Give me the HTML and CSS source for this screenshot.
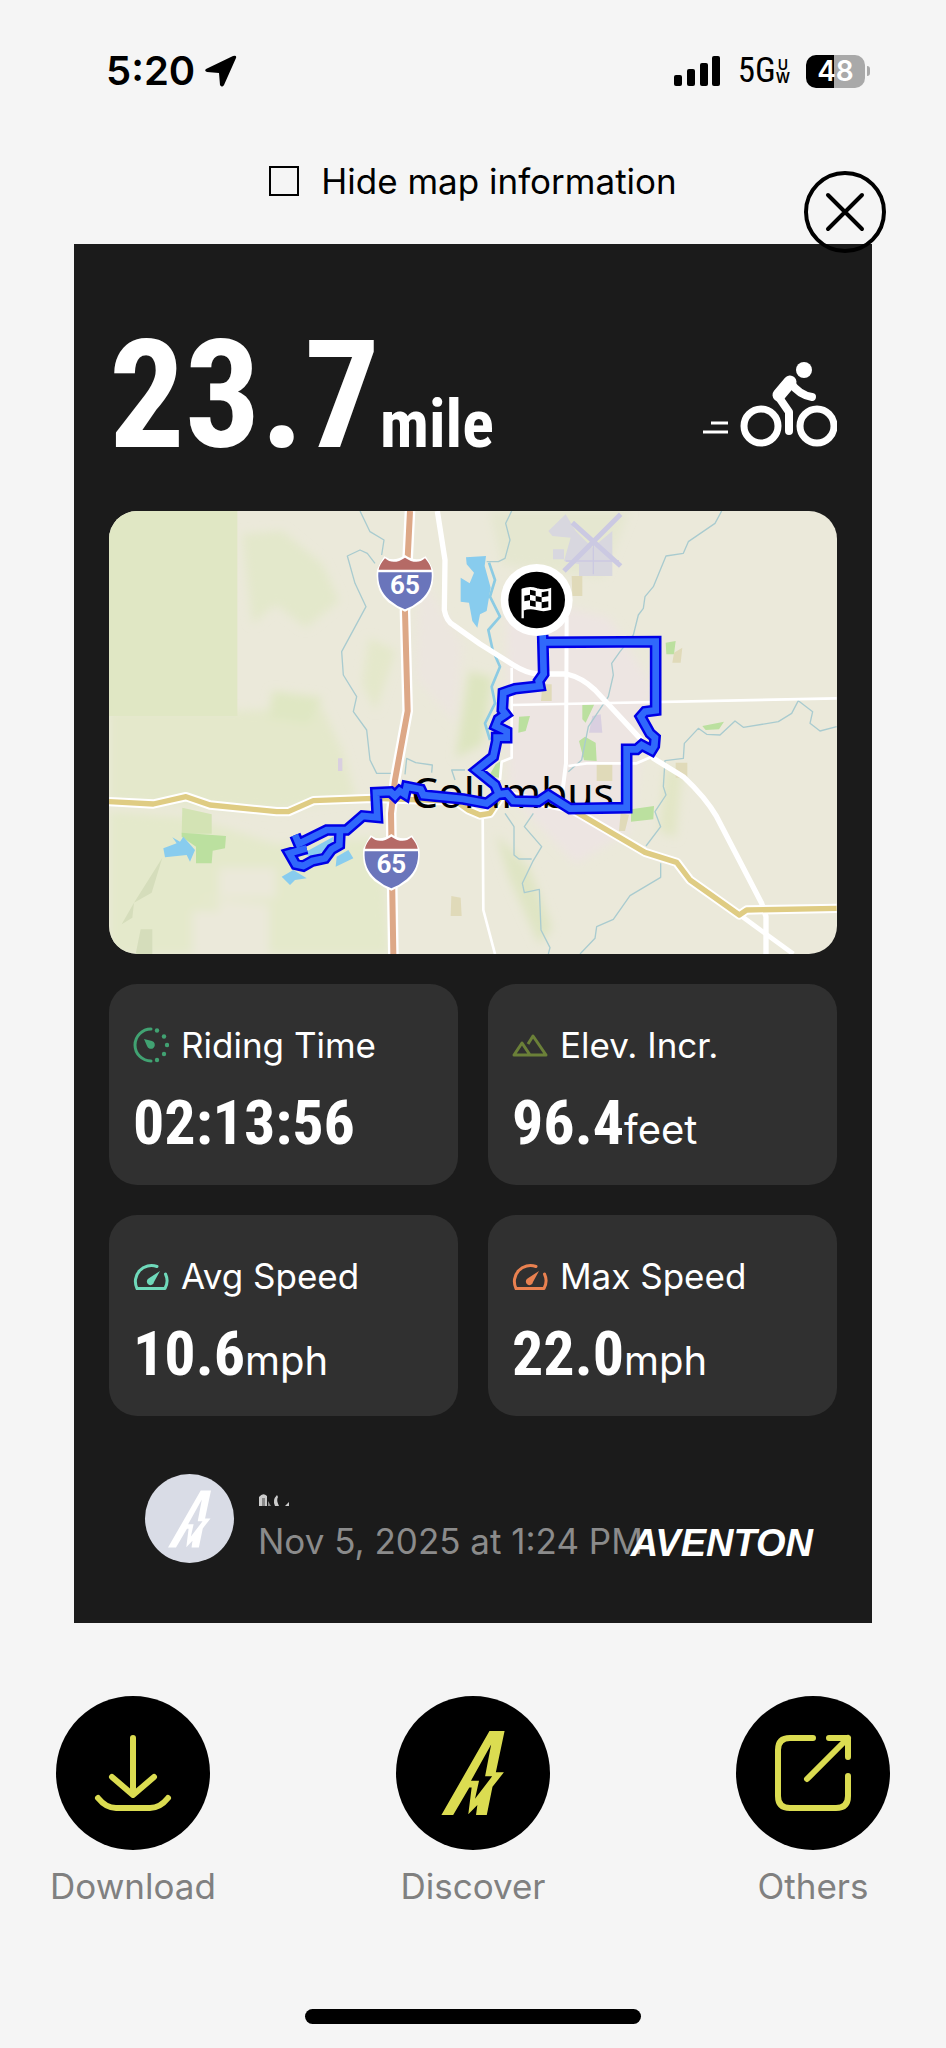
FILE: index.html
```html
<!DOCTYPE html>
<html lang="en">
  <head>
    <meta charset="utf-8">
    <meta name="viewport" content="width=device-width, initial-scale=1">
    <title>Share ride</title>
    <link rel="stylesheet" href="styles.css">
  </head>
  <body>
    <!-- shared shapes -->
    <svg width="0" height="0" class="defs" aria-hidden="true">
      <symbol id="logo" viewBox="-55 150 188 250">
        <path fill="currentColor" fill-rule="evenodd" d="M88 150H133L107 273H131L97 316L80 400H48L52 370L25 398L35 318H28L-20 400H-55ZM93 190L33 298H57L45 352L96 285H75Z"/>
      </symbol>
      <symbol id="gauge" viewBox="0 0 36 36">
        <path d="M24 8.500A16 16 0 0 0 4 30.500H32A16 16 0 0 0 32.500 16" fill="none" stroke="currentColor" stroke-width="3" stroke-linejoin="round" stroke-linecap="round"/>
        <path d="M27 13L21 24A3.600 3.600 0 1 1 15.500 20.500Z" fill="currentColor"/>
      </symbol>
      <symbol id="shield" viewBox="-88 -88 176 176">
        <path d="M-62-80Q-35-60 0-84Q35-60 62-80Q75-60 84-40Q92 20 50 58Q25 76 0 86Q-25 76-50 58Q-92 20-84-40Q-75-60-62-80Z" fill="#fff"/>
        <path d="M-60-74Q-35-52 0-76Q35-52 60-74Q76-56 79-40H-79Q-76-56-60-74Z" fill="#b56a66"/>
        <path d="M-80-32H80Q84 20 46 52Q25 70 0 79Q-25 70-46 52Q-84 20-80-32Z" fill="#6a75bb"/>
      </symbol>
    </svg>

    <div class="page">
      <header class="status-bar">
        <div class="status-left">
          <span class="clock">5:20</span>
          <svg class="location" viewBox="0 0 32 32"><path d="M31 3L19 30Q17 33 15 30L14 18L2 17Q-1 16 1 14L28 1Q32 0 31 3Z"/></svg>
        </div>
        <div class="status-right">
          <svg class="signal" viewBox="0 0 46 30">
            <rect x="0" y="19" width="8" height="11" rx="2"/>
            <rect x="13" y="13" width="8" height="17" rx="2"/>
            <rect x="26" y="7" width="8" height="23" rx="2"/>
            <rect x="38" y="0" width="8" height="30" rx="2"/>
          </svg>
          <span class="network">5G</span>
          <span class="network-sub"><span>U</span><span>W</span></span>
          <span class="battery">48</span>
          <span class="battery-tip"></span>
        </div>
      </header>

      <div class="toolbar">
        <label class="hide-map"><input type="checkbox" class="checkbox">Hide map information</label>
        <button class="close" aria-label="Close">
          <svg viewBox="0 0 84 84"><circle cx="42" cy="42" r="39"/><path d="M25 25L59 59M59 25L25 59"/></svg>
        </button>
      </div>

      <main class="card">
        <div class="summary">
          <div class="distance">23.7<span class="distance-unit">mile</span></div>
          <svg class="rider" viewBox="0 0 135 86">
            <g fill="none" stroke="#fff" stroke-linecap="round" stroke-linejoin="round">
              <circle cx="59" cy="65" r="17" stroke-width="7"/>
              <circle cx="115" cy="65" r="17" stroke-width="7"/>
              <path d="M9 62H26M1 71H26" stroke-width="3" stroke-linecap="butt"/>
              <path d="M87 70V51L76 35L88 21Q97 34 110 36" stroke-width="8"/>
              <path d="M77 34L88 21" stroke-width="13"/>
            </g>
            <circle cx="102" cy="9" r="8" fill="#fff"/>
          </svg>
        </div>

        <svg class="map" viewBox="0 0 2184 1329" role="img" aria-label="Ride route around Columbus">
          <defs>
            <filter id="soft"><feGaussianBlur stdDeviation="14"/></filter>
          </defs>
          <rect width="2184" height="1329" fill="#ebe9da"/>
          <!-- fields and built-up area -->
          <g filter="url(#soft)">
            <path d="M0 600H370L640 590L700 720L740 860L500 900L0 870Z" fill="#e4e8cb"/>
            <path d="M0 900L250 920L500 1000L820 980L840 1329H0Z" fill="#e4e9cb"/>
            <path d="M260 1160H500V1070H330V1200H250V1329H480V1180Z" fill="#ebe9da"/>
            <path d="M400 70L520 60L640 160L690 270L590 350L500 280L430 340Z" fill="#e3e8cb"/>
            <path d="M490 540L640 560L600 640L480 620Z" fill="#dfe7c3"/>
            <path d="M930 180L1060 400L1040 640L920 500Z" fill="#ece6df"/>
            <path d="M1190 240L1500 320L1630 520L1560 960L1400 1060L1200 850Z" fill="#ede5e2"/>
            <path d="M1140 0H1560L1480 200L1180 160Z" fill="#e5e7d0"/>
            <path d="M1160 970L1260 1070L1330 1250L1290 1300L1200 1100Z" fill="#dfe5c4"/>
            <path d="M1670 770L1720 780L1700 980L1650 960Z" fill="#e2e6c6"/>
            <path d="M780 380L860 420L800 600L760 520Z" fill="#e4e8cb"/>
            <path d="M1080 480L1150 500L1120 700L1040 740Z" fill="#dde5c0"/>
          </g>
          <rect width="385" height="615" fill="#e0e7c4"/>
          <path d="M160 1040L128 1145L75 1175ZM75 1175L38 1240L70 1220ZM95 1255H130V1329H80Z" fill="#d5ddbb"/>
          <!-- parks -->
          <path d="M220 890L308 910V968H218Z" fill="#d3e3b4"/>
          <path d="M218 965L351 975L348 1012L311 1019L308 1057H261V1007L218 977Z" fill="#bbe09f"/>
          <path d="M1230 617L1263 615L1250 660L1228 665ZM1420 582L1456 580L1430 635L1420 625ZM1410 690L1428 677L1460 695L1463 750L1425 748ZM1670 395L1700 390L1695 430L1672 430ZM1780 645L1845 632L1830 655L1790 657ZM1566 895L1635 885L1633 925L1566 932ZM1160 760L1175 750L1170 800L1140 795Z" fill="#bbe09f"/>
          <path d="M1463 760H1510V810H1463ZM1535 905L1560 912L1548 960H1530ZM1388 195H1420V255H1390ZM1695 425L1720 410L1715 455H1690ZM1300 520H1328V570H1296ZM1700 755H1735V800H1700ZM1027 1155L1055 1160L1058 1215H1025Z" fill="#e0dab9"/>
          <path d="M1450 615L1475 610L1480 665H1440ZM687 742H700V780H687Z" fill="#d9cfe0"/>
          <!-- airport -->
          <g fill="#d8d7df" stroke="#cbc9e2">
            <path d="M1318 60L1370 10L1400 60L1385 80L1330 75ZM1400 60L1450 110L1510 60V195H1410V160L1365 150L1385 80ZM1332 115H1365V145H1332Z" stroke="none"/>
            <path d="M1390 35L1535 165M1535 10L1365 180" stroke-width="15" fill="none"/>
            <path d="M1453 100V190M1370 150H1530" stroke-width="4" fill="none"/>
          </g>
          <!-- water -->
          <g fill="#88ccee">
            <path d="M1071 139L1131 135L1127 165L1145 230L1133 300L1113 310L1105 350L1090 330L1080 275L1055 272V200L1082 217L1095 185L1073 160Z"/>
            <path d="M163 1012L203 997L190 979L213 992L223 977L258 1017L243 1052L233 1032L168 1039Z"/>
            <path d="M518 1097L553 1077L593 1102L558 1107L543 1122ZM683 1037L718 1017L733 1042L680 1067ZM583 1027L673 977L668 1007L633 1027L603 1037Z"/>
          </g>
          <g fill="none" stroke="#a9cbcf" stroke-width="4" stroke-linejoin="round">
            <path d="M753 0L783 62L825 87L818 132M798 157L775 127L753 117L715 135L738 217L771 287L698 422L703 492L743 557L733 602L773 657L783 747L803 787H858"/>
            <path d="M888 790L893 742L920 755L970 762L968 785M1068 777H1028L1038 807"/>
            <path d="M1208 0L1190 37L1203 87L1188 142L1168 152H1133"/>
            <path d="M1838 0L1818 37L1738 92L1723 127L1671 135L1633 227L1608 257L1603 292L1588 312L1573 372L1533 422L1508 457L1513 492L1498 557L1438 647L1418 747L1378 782"/>
            <path d="M2183 647L2133 660L2103 637L2111 602L2068 569L2048 607L2008 632L1903 649L1878 630L1833 672L1793 670L1768 652L1726 697L1723 742L1668 749L1663 827L1671 852L1638 902L1655 947L1611 1005M1655 1057V1099L1563 1154L1513 1225L1463 1247L1458 1282L1413 1329"/>
            <path d="M1188 907L1215 947V1032L1230 1044H1268M1273 907L1246 947L1298 1007L1271 1052L1240 1117L1246 1145L1291 1135L1296 1257L1323 1310L1318 1329"/>
            <path d="M1140 155L1158 207L1143 257L1173 317L1138 357L1151 417L1173 467L1148 527L1158 577L1128 637L1143 687" stroke="#8ccbe3" stroke-width="8"/>
          </g>
          <!-- roads -->
          <g fill="none" stroke="#fff" stroke-linejoin="round">
            <path d="M985 0L1008 147L1006 297Q1012 330 1033 342L1113 399L1213 462Q1250 485 1283 489H1373Q1420 500 1458 537L1593 682L1633 742L1723 797Q1790 860 1823 917L1958 1177L1971 1217V1329" stroke-width="16"/>
            <path d="M1373 317L1371 757L1361 837" stroke-width="12"/>
            <path d="M1208 582L2183 562M1208 470V740L1178 752L1173 807M1378 765L1433 757H1583L1633 735M1121 907L1123 1197L1158 1329" stroke-width="8"/>
            <path d="M1893 1212L2053 1329" stroke-width="14"/>
            <path d="M0 872L133 879L231 857L303 882L503 902H538L613 869L793 862L1040 870L1078 897L1113 912L1143 907L1180 850L1383 892L1608 1024L1703 1054L1743 1107L1891 1212L1913 1197L2183 1192" stroke-width="28"/>
            <path d="M903 0L888 302L896 600L880 687L858 807L846 907L853 1329" stroke-width="32"/>
            <path d="M0 872L133 879L231 857L303 882L503 902H538L613 869L793 862L1040 870L1078 897L1113 912L1143 907L1180 850L1383 892L1608 1024L1703 1054L1743 1107L1891 1212L1913 1197L2183 1192" stroke="#dfcc83" stroke-width="16"/>
            <path d="M903 0L888 302L896 600L880 687L858 807L846 907L853 1329" stroke="#dda887" stroke-width="18"/>
          </g>
          <text x="906" y="892" class="map-city">Columbus</text>
          <use href="#shield" x="800" y="128" width="176" height="176"/>
          <text x="888" y="250" class="map-shield">65</text>
          <use href="#shield" x="759" y="965" width="176" height="176"/>
          <text x="847" y="1087" class="map-shield">65</text>
          <!-- ride route: dark edge, then lighter core -->
          <defs>
            <path id="route" d="M1301 372L1304 489L1289 510L1292 525L1218 533L1183 545L1180 597L1190 610L1168 625L1160 645L1193 661V680H1163V690L1153 737L1103 777L1158 822L1168 847M1301 394L1640 392V598L1608 602L1595 617L1623 667L1638 680L1636 705L1628 718L1598 702L1583 715H1553V890L1383 893L1318 852L1288 872L1213 870L1193 847L1168 850L1133 877L1063 864L943 852L935 835L893 827L888 850L872 840L858 855L845 843L801 845L805 919L761 915L713 957L653 957L573 997M693 957L691 1002L668 1015L648 1042L610 1050L583 1065L560 1060L541 1027L593 1012M558 972L573 1007"/>
          </defs>
          <g fill="none" stroke-miterlimit="2">
            <use href="#route" stroke="#0000e6" stroke-width="35"/>
            <use href="#route" stroke="#3068fb" stroke-width="20"/>
          </g>
          <!-- finish marker -->
          <circle cx="1283" cy="267" r="108" fill="#fff"/>
          <circle cx="1283" cy="267" r="85" fill="#000"/>
          <path d="M1241 322V236Q1262 227 1283 235Q1304 241 1323 235V294Q1304 300 1283 294Q1262 288 1241 296" fill="#fff" stroke="#fff" stroke-width="7"/>
          <path d="M1263 236L1280 240V255L1263 251ZM1298 244L1318 240V256L1298 259ZM1246 254L1263 251V268L1246 271ZM1280 255L1298 259V274L1280 271ZM1263 268L1280 271V288L1263 284ZM1298 274L1318 271V289L1298 292Z" fill="#000"/>
        </svg>

        <div class="stats">
          <section class="stat">
            <h2 class="stat-title">
              <svg class="stat-icon time" viewBox="0 0 36 36">
                <path d="M18 2A16 16 0 0 0 18 34" fill="none" stroke="currentColor" stroke-width="3" stroke-linecap="round"/>
                <g fill="currentColor"><circle cx="24" cy="3.500" r="2.200"/><circle cx="31" cy="9.500" r="2.200"/><circle cx="34" cy="18" r="2.200"/><circle cx="31" cy="27" r="2.200"/><circle cx="24" cy="33" r="2.200"/><path d="M11 12L19 14A4 4 0 1 1 14 19Z"/></g>
              </svg>
              Riding Time
            </h2>
            <p class="stat-value">02:13:56</p>
          </section>
          <section class="stat">
            <h2 class="stat-title">
              <svg class="stat-icon elevation" viewBox="0 0 36 36">
                <path d="M14 28H34L21 9L16 17M2 28L10 16L18 28Z" fill="none" stroke="currentColor" stroke-width="3" stroke-linejoin="round"/>
              </svg>
              Elev. Incr.
            </h2>
            <p class="stat-value">96.4<span class="stat-unit">feet</span></p>
          </section>
          <section class="stat">
            <h2 class="stat-title"><svg class="stat-icon avg"><use href="#gauge"/></svg>Avg Speed</h2>
            <p class="stat-value">10.6<span class="stat-unit">mph</span></p>
          </section>
          <section class="stat">
            <h2 class="stat-title"><svg class="stat-icon max"><use href="#gauge"/></svg>Max Speed</h2>
            <p class="stat-value">22.0<span class="stat-unit">mph</span></p>
          </section>
        </div>

        <footer class="rider-info">
          <div class="avatar"><svg><use href="#logo"/></svg></div>
          <div class="rider-text">
            <!-- erased user name -->
            <svg class="rider-name" viewBox="0 0 34 20" aria-hidden="true">
              <path d="M1 18V9Q5 4 9 8V18H6V11H4V18ZM17 18Q14 12 19 7L20 9Q18 12 21 18ZM27 18L31 14V18Z" fill="#ccc"/>
              <path d="M4 10H7V18H4ZM10 13L13 18H10Z" fill="#888"/>
            </svg>
            <time class="ride-date" datetime="2025-11-05T13:24">Nov 5, 2025 at 1:24 PM</time>
          </div>
          <span class="wordmark">AVENTON</span>
        </footer>
      </main>

      <nav class="actions">
        <button class="action">
          <span class="action-icon">
            <svg viewBox="0 0 154 154"><path d="M77 42V96M56 81L77 99L98 81M42 102Q50 112 60 112H94Q104 112 112 102"/></svg>
          </span>
          Download
        </button>
        <button class="action">
          <span class="action-icon"><svg class="action-logo"><use href="#logo"/></svg></span>
          Discover
        </button>
        <button class="action">
          <span class="action-icon">
            <svg viewBox="0 0 154 154"><path d="M77 42H54Q42 42 42 54V100Q42 112 54 112H100Q112 112 112 100V80M93 42H112V61M112 42L71 83"/></svg>
          </span>
          Others
        </button>
      </nav>

      <div class="home-indicator"></div>
    </div>
  </body>
</html>
```

FILE: styles.css
```css
* {
  box-sizing: border-box;
}
body {
  margin: 0;
  background: #f5f5f5;
  color: #000;
  font-family: Inter, "Liberation Sans", sans-serif;
  font-size: 35px;
  line-height: 44px;
}
button {
  padding: 0;
  border: 0;
  background: none;
  color: inherit;
  font: inherit;
  cursor: pointer;
}
h2,
p {
  margin: 0;
}
svg {
  display: block;
}
.defs {
  position: absolute;
}
.page {
  display: flex;
  flex-direction: column;
  min-height: 100vh;
}

/* status bar */
.status-bar {
  display: flex;
  justify-content: space-between;
  align-items: center;
  padding: 49px 76px 0 106px;
}
.status-left,
.status-right {
  display: flex;
  align-items: center;
}
.clock {
  font-size: 40px;
  font-weight: 600;
}
.location {
  width: 32px;
  height: 32px;
  margin-left: 10px;
}
.signal {
  width: 46px;
  height: 30px;
  margin-right: 18px;
}
.network {
  font-family: "Roboto Condensed", Roboto, sans-serif;
  font-size: 35px;
}
.network-sub {
  display: flex;
  flex-direction: column;
  align-items: center;
  margin-right: 16px;
  font-size: 14px;
  font-weight: 600;
  line-height: 13px;
}
.battery {
  width: 59px;
  height: 33px;
  border-radius: 10px;
  background: linear-gradient(90deg, #000 48%, #a9a9a9 48%);
  color: #fff;
  font-size: 28px;
  font-weight: 600;
  line-height: 33px;
  text-align: center;
}
.battery-tip {
  width: 3px;
  height: 10px;
  margin-left: 2px;
  border-radius: 0 3px 3px 0;
  background: #a9a9a9;
}

/* checkbox row */
.toolbar {
  position: relative;
  display: flex;
  justify-content: center;
  padding: 66px 0 41px;
}
.hide-map {
  display: flex;
  align-items: center;
  gap: 22px;
}
.checkbox {
  width: 30px;
  height: 30px;
  margin: 0;
  border: 2px solid #000;
  appearance: none;
}
.checkbox:checked {
  background: #000;
}
.close {
  position: absolute;
  right: 59px;
  bottom: -10px;
  width: 84px;
  height: 84px;
}
.close svg {
  fill: none;
  stroke: #000;
  stroke-width: 4;
  stroke-linecap: round;
}

/* ride card */
.card {
  margin: 0 74px;
  padding: 0 35px 60px;
  background: #1b1b1b;
  color: #fff;
}
.summary {
  display: flex;
  justify-content: space-between;
  align-items: baseline;
  padding: 77px 0 40px;
}
.distance {
  font-family: "Roboto Condensed", Roboto, sans-serif;
  font-size: 150px;
  font-weight: 700;
  line-height: 150px;
}
.distance-unit {
  font-size: 66px;
  line-height: 66px;
}
.rider {
  width: 135px;
  height: 86px;
}
.map {
  width: 100%;
  height: auto;
  border-radius: 28px;
}
.map-city {
  font-family: "Noto Sans", sans-serif;
  font-size: 128px;
}
.map-shield {
  fill: #fff;
  font-family: Roboto, sans-serif;
  font-size: 78px;
  font-weight: 700;
  text-anchor: middle;
}

/* stat tiles */
.stats {
  display: grid;
  grid-template-columns: 1fr 1fr;
  gap: 30px;
  margin-top: 30px;
}
.stat {
  padding: 39px 24px 28px;
  border-radius: 28px;
  background: #303030;
}
.stat-title {
  display: flex;
  align-items: center;
  gap: 12px;
  font-size: 35px;
  font-weight: 400;
}
.stat-icon {
  width: 36px;
  height: 36px;
}
.time {
  color: #41a272;
}
.elevation {
  color: #6b8038;
}
.avg {
  color: #6fd9ba;
}
.max {
  color: #e98150;
}
.stat-value {
  margin-top: 22px;
  font-family: "Roboto Condensed", Roboto, sans-serif;
  font-size: 62px;
  font-weight: 700;
  line-height: 68px;
}
.stat-unit {
  font-family: Inter, sans-serif;
  font-size: 40px;
  font-weight: 400;
  line-height: 40px;
}

/* rider and brand */
.rider-info {
  display: flex;
  align-items: center;
  margin-top: 58px;
  padding: 0 24px 0 36px;
}
.avatar {
  display: flex;
  flex: none;
  justify-content: center;
  align-items: center;
  width: 89px;
  height: 89px;
  border-radius: 50%;
  background: #d9dce6;
  color: #fff;
}
.avatar svg {
  width: 43px;
  height: 58px;
}
.rider-text {
  flex: 1;
  min-width: 0;
  margin-left: 24px;
  white-space: nowrap;
}
.rider-name {
  width: 34px;
  height: 20px;
  margin-top: 14px;
}
.ride-date {
  display: block;
  margin-top: 11px;
  color: #8b8b8b;
}
.wordmark {
  align-self: flex-end;
  z-index: 1;
  font-family: "Liberation Sans", Arial, sans-serif;
  font-size: 38px;
  font-style: italic;
  font-weight: 700;
  line-height: 40px;
}

/* share actions */
.actions {
  display: flex;
  justify-content: space-between;
  padding: 73px 46px 0;
}
.action {
  display: flex;
  flex-direction: column;
  align-items: center;
  gap: 14px;
  width: 174px;
  color: #808080;
}
.action-icon {
  display: flex;
  justify-content: center;
  align-items: center;
  width: 154px;
  height: 154px;
  border-radius: 50%;
  background: #000;
  color: #dbdc51;
}
.action-icon svg {
  width: 154px;
  fill: none;
  stroke: currentColor;
  stroke-width: 6;
  stroke-linecap: round;
  stroke-linejoin: round;
}
.action-icon .action-logo {
  width: 64px;
  height: 84px;
  stroke: none;
}
.home-indicator {
  width: 336px;
  height: 15px;
  margin: auto auto 24px;
  border-radius: 8px;
  background: #000;
}
```
